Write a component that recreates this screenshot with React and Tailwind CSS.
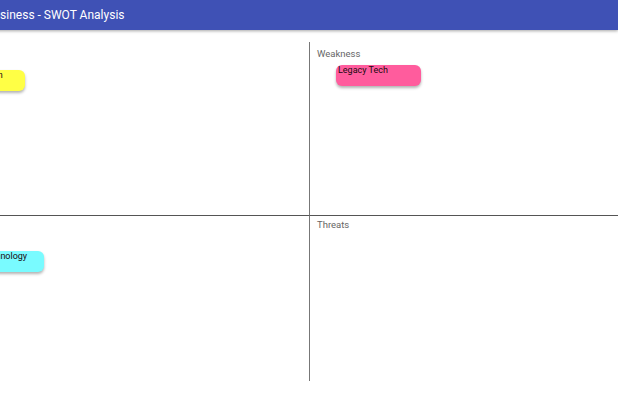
import React from 'react'

const notes = {
  strength: [{ text: 'Prime Location', x: 80, y: 28, color: 'bg-[#ffff45]' }],
  weakness: [{ text: 'Legacy Tech', x: 26, y: 23, color: 'bg-[#ff5c9d]' }],
  opportunity: [{ text: 'New Technology', x: 99, y: 35, color: 'bg-[#79fbff]' }],
  threats: [],
}

function Note({ note }) {
  return (
    <div
      className={`absolute w-[85px] h-[21px] rounded-[6px] px-[2px] text-[9px] leading-[11px] text-[#1a0a10] shadow-[0_2px_3px_rgba(0,0,0,0.3)] ${note.color}`}
      style={{ left: note.x, top: note.y }}
    >
      {note.text}
    </div>
  )
}

function Quadrant({ label, items, className, labelClass = 'pt-[6px]' }) {
  return (
    <div className={`relative ${className}`}>
      <div className={`pl-[7px] text-[9.5px] leading-[12px] text-[#666] ${labelClass}`}>{label}</div>
      {items.map((n, i) => (
        <Note key={i} note={n} />
      ))}
    </div>
  )
}

export default function App() {
  return (
    <div className="w-[618px] h-[394px] overflow-hidden bg-white" style={{ fontFamily: 'Roboto, "Liberation Sans", sans-serif' }}>
      <div className="-ml-[140px] w-[758px]">
        <header className="h-[30px] bg-[#3f51b5] flex items-center pl-[126px] pb-[1px] shadow-[0_1px_3px_rgba(0,0,0,0.35)] relative z-10">
          <h1 className="text-white text-[12px] font-normal">Business - SWOT Analysis</h1>
        </header>
        <main className="pt-[12px]">
          <div className="grid grid-cols-[449px_309px] grid-rows-[173px_166px]">
            <Quadrant label="Strength" items={notes.strength} className="" />
            <Quadrant label="Weakness" items={notes.weakness} className="border-l-[1.5px] border-[#777]" />
            <Quadrant label="Opportunity" items={notes.opportunity} labelClass="pt-[3px]" className="border-t border-[#555]" />
            <Quadrant label="Threats" items={notes.threats} labelClass="pt-[3px]" className="border-t border-l-[1.5px] border-t-[#555] border-l-[#777]" />
          </div>
        </main>
      </div>
    </div>
  )
}
